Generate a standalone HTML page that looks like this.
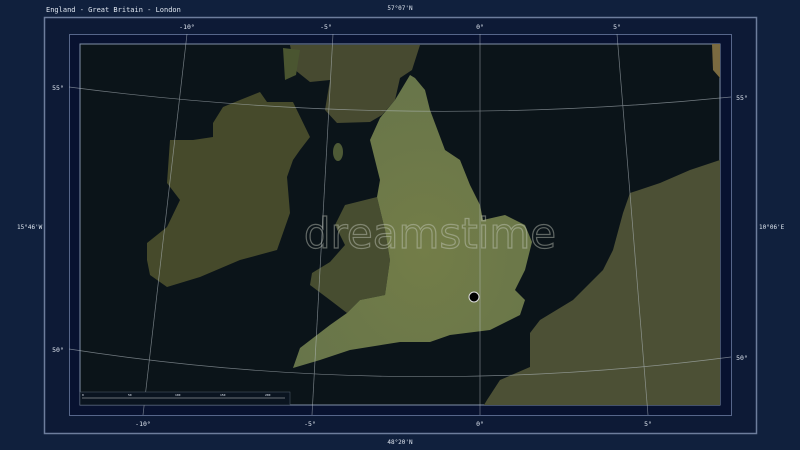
<!DOCTYPE html>
<html><head><meta charset="utf-8"><style>
html,body{margin:0;padding:0;width:800px;height:450px;overflow:hidden;background:#10203d;}
svg{display:block}
text{font-family:"DejaVu Sans Mono","Liberation Mono",monospace;fill:#dfe6f0;}
</style></head><body>
<svg width="800" height="450" viewBox="0 0 800 450">
<defs>
<radialGradient id="eng" cx="0.55" cy="0.6" r="0.7"><stop offset="0" stop-color="#737d48"/><stop offset="1" stop-color="#66744a"/></radialGradient>
</defs>
<rect width="800" height="450" fill="#10203d"/>
<rect x="44.5" y="17.5" width="712" height="416" fill="#0d1a36" stroke="#6d7d9c" stroke-width="1.5"/>
<rect x="69.5" y="34.5" width="662" height="381" fill="#081230" stroke="#56668a" stroke-width="1"/>
<rect x="80" y="44" width="640" height="361" fill="#0b1419" stroke="#8190a8" stroke-width="1"/>
<!-- Ireland -->
<path d="M223,107 L240,100 260,92 267,102 293,102 310,137 300,150 293,160 287,177 290,213 277,250 240,260 200,277 167,287 150,275 147,260 147,243 167,227 180,200 167,183 170,140 193,140 213,137 213,123 Z" fill="#464a2b"/>
<!-- Scotland -->
<path d="M290,45 L420,45 412,70 400,78 395,100 382,115 370,122 337,123 325,110 330,80 310,82 295,70 Z" fill="#474a30"/>
<path d="M283,48 L300,50 296,75 285,80 Z" fill="#4a5530"/>
<ellipse cx="338" cy="152" rx="5" ry="9" fill="#4e5a36"/>
<!-- Wales -->
<path d="M345,205 L377,197 385,230 390,260 385,295 360,300 347,313 330,300 310,285 312,273 330,262 345,245 335,225 Z" fill="#474d30"/>
<!-- England -->
<path d="M395,100 L410,75 415,78 425,90 430,110 445,150 460,160 470,185 480,205 483,220 505,215 525,225 532,242 525,270 515,290 525,300 520,315 490,330 450,335 430,342 400,342 350,350 320,360 293,368 300,348 330,325 347,313 360,300 385,295 390,260 385,230 377,197 380,180 375,160 370,140 380,118 Z" fill="url(#eng)"/>
<!-- continent -->
<path d="M720,160 L690,170 660,183 630,193 623,213 613,250 603,270 573,300 540,320 530,333 530,367 500,380 487,400 484,405 720,405 Z" fill="#4c5035"/>
<path d="M712,44 L720,44 720,78 713,70 Z" fill="#7a6a40"/>
<!-- grid -->
<g stroke="#b9c2c8" stroke-width="0.7" fill="none" opacity="0.6">
<path d="M187,34 L143,415"/>
<path d="M333,34 L312,415"/>
<path d="M480,34 L480,415"/>
<path d="M617,34 L648,415"/>
<path d="M69,87 Q400,130 731,97"/>
<path d="M69,349 Q400,400 731,357"/>
</g>
<text x="430" y="248" font-size="42" style="fill:none;stroke:#c8ccc0;stroke-width:1.2;opacity:0.45;font-family:'DejaVu Sans',sans-serif" text-anchor="middle">dreamstime</text>
<!-- London -->
<circle cx="474" cy="297" r="5" fill="#000" stroke="#ddd" stroke-width="1"/>
<!-- scale bar -->
<rect x="80" y="392" width="210" height="13" fill="#0a1420" stroke="#55606e" stroke-width="0.5"/>
<line x1="82" y1="398" x2="285" y2="398" stroke="#ccc" stroke-width="0.6"/>
<g font-size="3"><text x="82" y="396">0</text><text x="128" y="396">50</text><text x="175" y="396">100</text><text x="220" y="396">150</text><text x="265" y="396">200</text></g>
<!-- labels -->
<text x="46" y="12" font-size="7">England - Great Britain - London</text>
<text x="400" y="10" font-size="6" text-anchor="middle">57°07'N</text>
<text x="400" y="444" font-size="6" text-anchor="middle">48°20'N</text>
<text x="17" y="229" font-size="6">15°46'W</text>
<text x="759" y="229" font-size="6">10°06'E</text>
<g font-size="6.5" text-anchor="middle">
<text x="187" y="29">-10°</text><text x="326" y="29">-5°</text><text x="480" y="29">0°</text><text x="617" y="29">5°</text>
<text x="143" y="426">-10°</text><text x="310" y="426">-5°</text><text x="480" y="426">0°</text><text x="648" y="426">5°</text>
<text x="58" y="90">55°</text><text x="58" y="352">50°</text>
<text x="742" y="100">55°</text><text x="742" y="360">50°</text>
</g>
</svg>
</body></html>
